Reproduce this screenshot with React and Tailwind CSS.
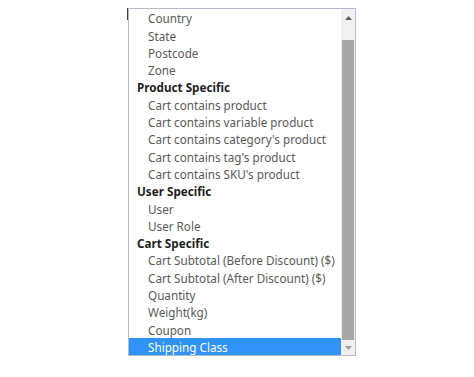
import React from "react";

const rows = [
  { t: "Country" },
  { t: "State" },
  { t: "Postcode" },
  { t: "Zone" },
  { t: "Product Specific", g: true },
  { t: "Cart contains product" },
  { t: "Cart contains variable product" },
  { t: "Cart contains category's product" },
  { t: "Cart contains tag's product" },
  { t: "Cart contains SKU's product" },
  { t: "User Specific", g: true },
  { t: "User" },
  { t: "User Role" },
  { t: "Cart Specific", g: true },
  { t: "Cart Subtotal (Before Discount) ($)" },
  { t: "Cart Subtotal (After Discount) ($)" },
  { t: "Quantity" },
  { t: "Weight(kg)" },
  { t: "Coupon" },
  { t: "Shipping Class", s: true },
];

export default function App() {
  return (
    <div className="w-[474px] h-[377px] bg-white pt-[8px] pl-[128px]" style={{ fontFamily: '"Noto Sans", "Open Sans", sans-serif' }}>
      <div className="relative w-[228px] h-[348px] border border-[#b4bccb] flex">
        <span className="absolute left-[-2px] top-[-1px] w-[1px] h-[12px] bg-[#444]" />
        <div className="w-[212px] flex flex-col">
          {rows.map((r, i) => (
            <div
              key={i}
              className={
                "h-[17.3px] pt-[3px] flex items-center text-[11.7px] leading-none whitespace-nowrap " +
                (r.g
                  ? "pl-[8px] font-bold text-[#1f1f1f]"
                  : r.s
                  ? "pl-[19px] bg-[#2f93f7] text-white"
                  : "pl-[19px] text-[#5a5a5a]")
              }
            >
              {r.t}
            </div>
          ))}
        </div>
        <div className="w-[14px] bg-[#f0f0f0] flex flex-col items-center">
          <div className="h-[17px] w-full flex items-center justify-center">
            <svg width="7" height="4" viewBox="0 0 7 4"><polygon points="0,4 3.5,0 7,4" fill="#606060" /></svg>
          </div>
          <div className="h-[14px]" />
          <div className="h-[300px] w-[12px] bg-[#a6a6a6]" />
          <div className="h-[15px] w-full flex items-center justify-center">
            <svg width="7" height="4" viewBox="0 0 7 4"><polygon points="0,0 7,0 3.5,4" fill="#a0a0a0" /></svg>
          </div>
        </div>
      </div>
    </div>
  );
}
